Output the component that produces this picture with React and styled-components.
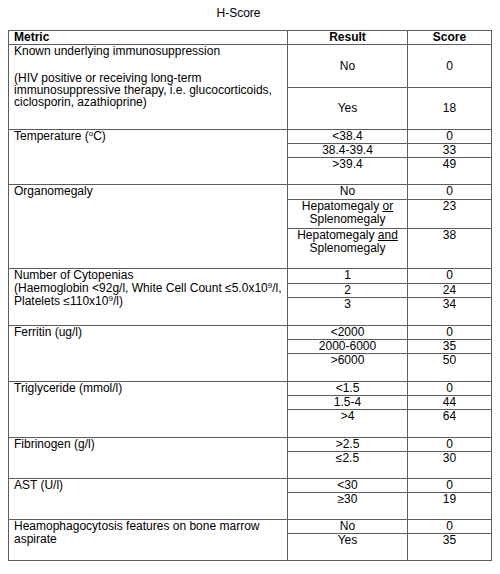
import React from "react";
import styled, { createGlobalStyle } from "styled-components";

const GlobalStyle = createGlobalStyle`
    body {
        margin: 0;
        background: #fff;
        font-family: "Liberation Sans", Arial, sans-serif;
        color: #000;
    }
`;

const Page = styled.div`
    width: 500px;
    height: 574px;
    background: #fff;
`;

const Title = styled.div`
    padding: 6px 23px 0 0;
    height: 30px;
    box-sizing: border-box;
    text-align: center;
    font-size: 12px;
    line-height: 14px;
`;

const Table = styled.table`
    margin-left: 8px;
    width: 484px;
    table-layout: fixed;
    border-collapse: collapse;
    font-size: 12px;
`;

const Col = styled.col`
    width: ${p => p.$w}px;
`;

const Cell = styled.td`
    box-sizing: border-box;
    border: 1px solid #5c5c5c;
    padding: 0;
    height: ${p => p.$h}px;
    line-height: 13px;
    text-align: ${p => (p.$left ? "left" : "center")};
    vertical-align: ${p => (p.$middle ? "middle" : "top")};
    padding-left: ${p => (p.$left ? "5px" : "0")};
`;

const HeadCell = styled(Cell).attrs({ as: "th" })`
    font-weight: bold;
    vertical-align: middle;
`;

const Note = styled.div`
    margin-top: 14px;
    line-height: 12px;
`;

const Sup = styled.sup`
    font-size: 8px;
    line-height: 0;
    vertical-align: 4px;
`;

const groups = [
    {
        metric: (
            <>
                Known underlying immunosuppression
                <Note>
                    (HIV positive or receiving long-term<br />
                    immunosuppressive therapy, i.e. glucocorticoids,<br />
                    ciclosporin, azathioprine)
                </Note>
            </>
        ),
        middle: true,
        rows: [["No", "0", 43], ["Yes", "18", 42]],
    },
    {
        metric: <>Temperature (<Sup>o</Sup>C)</>,
        rows: [["<38.4", "0", 14], ["38.4-39.4", "33", 14], [">39.4", "49", 27]],
    },
    {
        metric: "Organomegaly",
        rows: [
            ["No", "0", 15],
            [<>Hepatomegaly <u>or</u><br />Splenomegaly</>, "23", 29],
            [<>Hepatomegaly <u>and</u><br />Splenomegaly</>, "38", 40],
        ],
    },
    {
        metric: (
            <>
                Number of Cytopenias<br />
                (Haemoglobin &lt;92g/l, White Cell Count ≤5.0x10<Sup>9</Sup>/l,<br />
                Platelets ≤110x10<Sup>9</Sup>/l)
            </>
        ),
        rows: [["1", "0", 15], ["2", "24", 14], ["3", "34", 28]],
    },
    {
        metric: "Ferritin (ug/l)",
        rows: [["<2000", "0", 14], ["2000-6000", "35", 14], [">6000", "50", 28]],
    },
    {
        metric: "Triglyceride (mmol/l)",
        rows: [["<1.5", "0", 14], ["1.5-4", "44", 14], [">4", "64", 28]],
    },
    {
        metric: "Fibrinogen (g/l)",
        rows: [[">2.5", "0", 14], ["≤2.5", "30", 27]],
    },
    {
        metric: "AST (U/l)",
        rows: [["<30", "0", 14], ["≥30", "19", 27]],
    },
    {
        metric: "Heamophagocytosis features on bone marrow aspirate",
        rows: [["No", "0", 14], ["Yes", "35", 27]],
    },
];

export default function App() {
    return (
        <Page>
            <GlobalStyle />
            <Title>H-Score</Title>
            <Table>
                <colgroup>
                    <Col $w={279} />
                    <Col $w={120} />
                    <Col $w={84} />
                </colgroup>
                <thead>
                    <tr>
                        <HeadCell $left $h={14}>Metric</HeadCell>
                        <HeadCell $h={14}>Result</HeadCell>
                        <HeadCell $h={14}>Score</HeadCell>
                    </tr>
                </thead>
                <tbody>
                    {groups.map((g, gi) =>
                        g.rows.map(([result, score, h], ri) => (
                            <tr key={`${gi}-${ri}`}>
                                {ri === 0 && (
                                    <Cell $left rowSpan={g.rows.length}>
                                        {g.metric}
                                    </Cell>
                                )}
                                <Cell $h={h} $middle={g.middle}>{result}</Cell>
                                <Cell $h={h} $middle={g.middle}>{score}</Cell>
                            </tr>
                        ))
                    )}
                </tbody>
            </Table>
        </Page>
    );
}
